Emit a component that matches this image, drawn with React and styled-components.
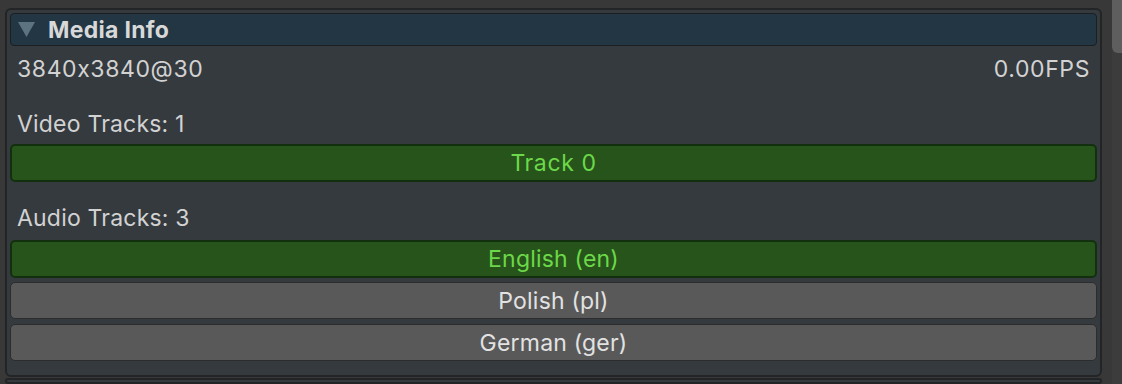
import React from "react";
import styled, { createGlobalStyle } from "styled-components";

const Global = createGlobalStyle`
  *, *::before, *::after { box-sizing: border-box; }
  html, body { margin: 0; padding: 0; background: #383838; }
  body {
    font-family: Inter, "Noto Sans", sans-serif;
    font-feature-settings: "calt" 0;
  }
  #root { width: 1122px; height: 384px; overflow: hidden; }
`;

const Page = styled.div`
  display: flex;
  width: 1122px;
  height: 384px;
  background: #383838;
`;

const Column = styled.div`
  flex: 1;
  display: flex;
  flex-direction: column;
  gap: 1px;
  padding: 8px 10px 0 5px;
`;

const Panel = styled.section`
  background: #353a3f;
  border: 2px solid #222426;
  border-radius: 6px;
  padding: 3px 3px 14px 3px;
  display: flex;
  flex-direction: column;
`;

const NextPanel = styled.div`
  height: 20px;
  background: #353a3f;
  border: 2px solid #222426;
  border-radius: 6px;
`;

const Header = styled.div`
  height: 33px;
  display: flex;
  align-items: center;
  gap: 13px;
  padding-left: 7px;
  background: #223644;
  border: 1.5px solid #1c1e20;
  border-radius: 4px;
  color: #d8d8d8;
  font-weight: 700;
  font-size: 23px;
  letter-spacing: 0.3px;
`;

const Caret = styled.svg`
  width: 17px;
  height: 15px;
  flex: none;
`;

const Text = styled.span`
  font-size: 23px;
  letter-spacing: ${(p) => (p.$wide ? 0.6 : 0.2)}px;
`;

const InfoRow = styled.div`
  display: flex;
  justify-content: space-between;
  align-items: center;
  height: 34px;
  padding: 0 7px 0 7px;
  margin-top: 6px;
  color: #d2d2d2;
`;

const Label = styled.div`
  height: 36px;
  display: flex;
  align-items: center;
  padding-left: 7px;
  color: #d2d2d2;
  margin-top: ${(p) => p.$top || 0}px;
`;

const TrackButton = styled.div`
  height: ${(p) => (p.$active ? 38 : 37)}px;
  margin-top: ${(p) => p.$top || 0}px;
  display: flex;
  align-items: center;
  justify-content: center;
  border-radius: 5px;
  background: ${(p) => (p.$active ? "#27541a" : "#595959")};
  border: ${(p) => (p.$active ? "2px solid #12300e" : "1.5px solid #2c2c2c")};
  color: ${(p) => (p.$active ? "#6cd84a" : "#e2e2e2")};
`;

const Scrollbar = styled.div`
  width: 10px;
  background: #3c3c3c;
  display: flex;
  flex-direction: column;
`;

const Thumb = styled.div`
  height: 53px;
  background: #5e5e5e;
  border-radius: 0 0 0 6px;
`;

export default function App() {
  return (
    <>
      <Global />
      <Page>
        <Column>
          <Panel>
            <Header>
              <Caret viewBox="0 0 17 15">
                <polygon points="0,0 17,0 8.5,15" fill="#5e7380" />
              </Caret>
              Media Info
            </Header>
            <InfoRow>
              <Text $wide>3840x3840@30</Text>
              <Text $wide>0.00FPS</Text>
            </InfoRow>
            <Label $top={20}><Text>Video Tracks: 1</Text></Label>
            <TrackButton $active $top={2}><Text $wide>Track 0</Text></TrackButton>
            <Label $top={18}><Text>Audio Tracks: 3</Text></Label>
            <TrackButton $active $top={4}><Text>English (en)</Text></TrackButton>
            <TrackButton $top={4}><Text>Polish (pl)</Text></TrackButton>
            <TrackButton $top={5}><Text>German (ger)</Text></TrackButton>
          </Panel>
          <NextPanel />
        </Column>
        <Scrollbar>
          <Thumb />
        </Scrollbar>
      </Page>
    </>
  );
}
